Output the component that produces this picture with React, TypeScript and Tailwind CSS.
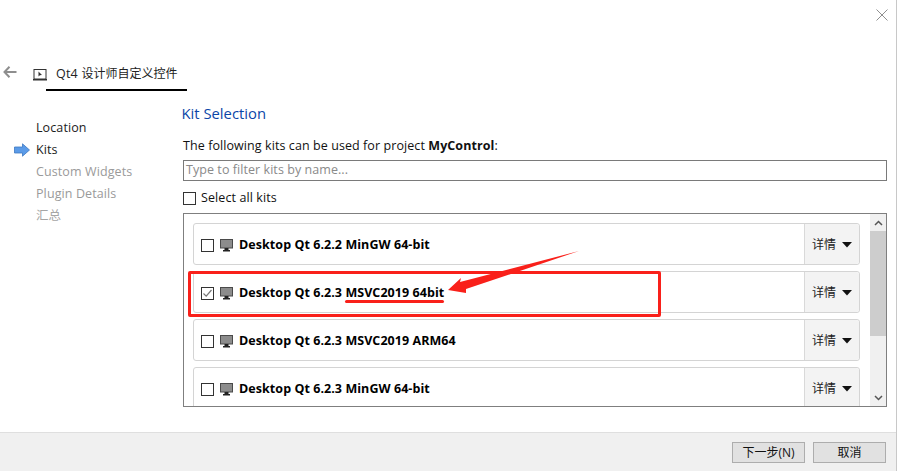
import React from "react";

const FONT = '"Open Sans","Noto Sans CJK SC",sans-serif';

function Monitor() {
  return (
    <svg width="13" height="13" viewBox="0 0 13 13" className="shrink-0">
      <rect x="0.5" y="0.5" width="12" height="8.5" fill="#8c8c8c" stroke="#4a4a4a" strokeWidth="1" />
      <rect x="4.5" y="9" width="4" height="2" fill="#222" />
      <rect x="3" y="11" width="7" height="1.5" fill="#222" />
    </svg>
  );
}

function Box({ checked }: { checked?: boolean }) {
  return (
    <span className="w-[13px] h-[13px] border border-[#333] bg-white shrink-0 flex items-center justify-center">
      {checked && (
        <svg width="11" height="11" viewBox="0 0 11 11">
          <path d="M1.5 5.5 L4.2 8.2 L9.5 2" fill="none" stroke="#777" strokeWidth="1.2" />
        </svg>
      )}
    </span>
  );
}

function KitRow({ name, checked }: { name: string; checked?: boolean }) {
  return (
    <div className="h-[42px] shrink-0 mb-[6px] flex border border-[#d4d4d4] rounded-[3px] bg-white">
      <div className="flex-1 flex items-center gap-[6px] pl-[7px] pt-[2px]">
        <Box checked={checked} />
        <Monitor />
        <span className="text-[12.5px] font-bold text-black tracking-[0.06px]">{name}</span>
      </div>
      <div className="w-[55px] bg-[#f3f3f3] border-l border-[#d9d9d9] flex items-center pl-[7px] gap-[6px] pt-[2px] rounded-r-[3px]">
        <span className="text-[12px] text-[#222]">详情</span>
        <svg width="10" height="6" viewBox="0 0 10 6">
          <path d="M0 0 H10 L5 5.5 Z" fill="#111" />
        </svg>
      </div>
    </div>
  );
}

export default function App() {
  return (
    <div
      className="relative w-[897px] h-[471px] overflow-hidden bg-white flex flex-col text-[12.5px] text-black border-r border-[#c8c8c8]"
      style={{ fontFamily: FONT }}
    >
      <div className="h-[28px] flex justify-end items-center pr-[8px] pt-[1px] shrink-0">
        <svg width="12" height="12" viewBox="0 0 12 12">
          <path d="M0.5 0.5 L11.5 11.5 M11.5 0.5 L0.5 11.5" stroke="#8f8f8f" strokeWidth="1" />
        </svg>
      </div>

      <div className="h-[64px] flex shrink-0 items-start pt-[39px] pl-[3px]">
        <svg width="14" height="12" viewBox="0 0 14 12" className="mt-[-1px]">
          <path d="M6.5 0.8 L1.5 6 L6.5 11.2 M1.5 6 H13.5" fill="none" stroke="#8e8e8e" strokeWidth="2" />
        </svg>
        <div className="ml-[29px] w-[141px] h-[36px] mt-[-5px] relative flex flex-col items-start">
          <div className="flex items-center h-[25px] ml-[-13px] gap-[8px] whitespace-nowrap">
            <svg width="15" height="13" viewBox="0 0 15 13">
              <rect x="1" y="1.5" width="12" height="9.5" fill="none" stroke="#333" />
              <rect x="0" y="11" width="14" height="1.5" fill="#333" />
              <path d="M5.5 3.5 L5.5 8.5 L6.9 7.2 L9 7 Z" fill="#333" />
            </svg>
            <span className="text-[12.5px] text-[#222] tracking-[0.2px]">
              Qt4 <span className="text-[12px] tracking-normal">设计师自定义控件</span>
            </span>
          </div>
          <div className="h-[2px] w-[141px] bg-black mt-[2px]" />
        </div>
      </div>

      <div className="flex flex-1 min-h-0">
        <div className="w-[183px] shrink-0 flex flex-col pt-[25px] pl-[14px]">
          {[
            ["Location", "text-[#1c1c1c]", false],
            ["Kits", "text-[#1c1c1c]", true],
            ["Custom Widgets", "text-[#9a9a9a]", false],
            ["Plugin Details", "text-[#9a9a9a]", false],
            ["汇总", "text-[#a5a5a5]", false],
          ].map(([t, c, a]) => (
            <div key={t as string} className="h-[22px] flex items-center relative pl-[22px]">
              {a && (
                <svg width="16" height="14" viewBox="0 0 16 14" className="absolute left-0 top-[4px]">
                  <path d="M0.5 4 H8.5 V0.8 L15.5 7 L8.5 13.2 V10 H0.5 Z" fill="#5b9be8" stroke="#3e78c2" strokeWidth="0.8" />
                </svg>
              )}
              <span className={`${c as string} tracking-[0.1px] whitespace-nowrap`}>{t as string}</span>
            </div>
          ))}
        </div>

        <div className="w-[704px] flex flex-col">
          <div className="text-[14.8px] text-[#0b46a8] h-[24px] leading-[24px] mt-[9px] ml-[-1.5px]">Kit Selection</div>
          <div className="h-[18px] mt-[12px] leading-[18px] tracking-[0.08px] text-[#111] whitespace-nowrap">
            The following kits can be used for project <b>MyControl</b>:
          </div>
          <div className="h-[21px] mt-[5px] border border-[#7a7a7a] flex items-center pl-[2px] text-[#8a8a8a] tracking-[0.06px]">
            Type to filter kits by name...
          </div>
          <div className="h-[20px] mt-[7px] flex items-center gap-[5px]">
            <Box />
            <span className="text-[#111] tracking-[0.1px]">Select all kits</span>
          </div>
          <div className="h-[194px] mt-[5px] border border-[#7f7f7f] flex overflow-hidden">
            <div className="flex-1 flex flex-col pt-[9px] pl-[9px] pr-[10px] min-w-0 overflow-hidden">
              <KitRow name="Desktop Qt 6.2.2 MinGW 64-bit" />
              <KitRow name="Desktop Qt 6.2.3 MSVC2019 64bit" checked />
              <KitRow name="Desktop Qt 6.2.3 MSVC2019 ARM64" />
              <KitRow name="Desktop Qt 6.2.3 MinGW 64-bit" />
            </div>
            <div className="w-[16px] bg-[#f0f0f0] shrink-0 flex flex-col items-center">
              <div className="h-[17px] flex items-center justify-center">
                <svg width="9" height="6" viewBox="0 0 9 6"><path d="M1 5 L4.5 1.5 L8 5" fill="none" stroke="#555" strokeWidth="1.5" /></svg>
              </div>
              <div className="w-full h-[105px] bg-[#cdcdcd]" />
              <div className="flex-1" />
              <div className="h-[17px] flex items-center justify-center">
                <svg width="9" height="6" viewBox="0 0 9 6"><path d="M1 1 L4.5 4.5 L8 1" fill="none" stroke="#555" strokeWidth="1.5" /></svg>
              </div>
            </div>
          </div>
        </div>
      </div>

      <div className="h-[39px] shrink-0 bg-[#f0f0f0] border-t border-[#dfdfdf] flex items-center justify-end gap-[8px] pr-[10px] pt-[1px]">
        <div className="w-[73px] h-[21px] bg-[#e1e1e1] border border-[#adadad] flex items-center justify-center text-[12px] text-[#111]">下一步(N)</div>
        <div className="w-[73px] h-[21px] bg-[#e1e1e1] border border-[#adadad] flex items-center justify-center text-[12px] text-[#111]">取消</div>
      </div>

      <div className="absolute left-[188px] top-[271px] w-[473px] h-[46px] border-[3px] border-[#f9201a] rounded-[2px]" />
      <div className="absolute left-[345px] top-[300px] w-[99px] h-[3px] bg-[#f9201a] rounded-full" />
      <svg className="absolute left-[440px] top-[245px]" width="145" height="55" viewBox="440 245 145 55">
        <path d="M448 290 L461 278 L460 282 L579 251 L466 289 L466 293 Z" fill="#f9201a" />
      </svg>
    </div>
  );
}
